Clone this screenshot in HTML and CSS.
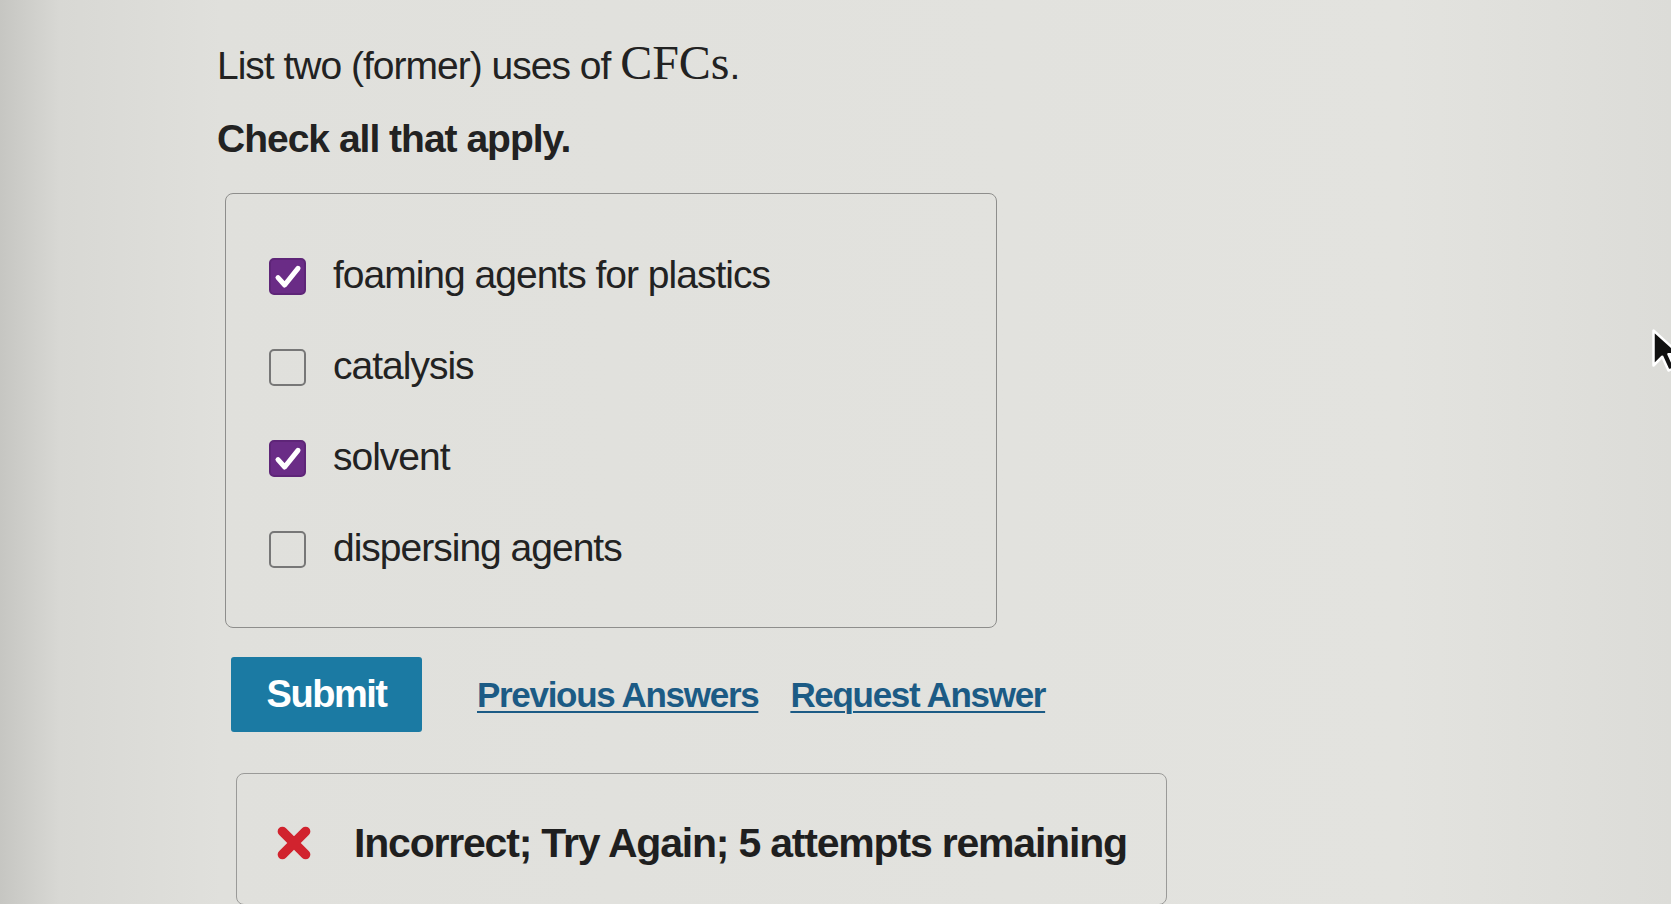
FILE: index.html
```html
<!DOCTYPE html>
<html lang="en">
<head>
    <meta charset="UTF-8">
    <title>List two (former) uses of CFCs</title>
    <link rel="stylesheet" href="styles.css">
</head>
<body>
    <div class="question">
        <p class="prompt">List two (former) uses of <span class="math">CFCs</span>.</p>
        <p class="instructions">Check all that apply.</p>

        <div class="choices">
            <label class="choice">
                <span class="box checked">
                    <svg viewBox="0 0 24 24" width="32" height="32"><path d="M4.5 12.5l5 5.5L19.5 5.5" fill="none" stroke="#fff" stroke-width="3.8" stroke-linecap="round" stroke-linejoin="round"/></svg>
                </span>
                <span class="choice-text">foaming agents for plastics</span>
            </label>
            <label class="choice">
                <span class="box"></span>
                <span class="choice-text">catalysis</span>
            </label>
            <label class="choice">
                <span class="box checked">
                    <svg viewBox="0 0 24 24" width="32" height="32"><path d="M4.5 12.5l5 5.5L19.5 5.5" fill="none" stroke="#fff" stroke-width="3.8" stroke-linecap="round" stroke-linejoin="round"/></svg>
                </span>
                <span class="choice-text">solvent</span>
            </label>
            <label class="choice">
                <span class="box"></span>
                <span class="choice-text">dispersing agents</span>
            </label>
        </div>

        <div class="actions">
            <button class="submit">Submit</button>
            <a href="#" class="action-link">Previous Answers</a>
            <a href="#" class="action-link">Request Answer</a>
        </div>

        <div class="feedback">
            <svg class="wrong-icon" viewBox="0 0 36 36" width="38" height="38"><path d="M7 7L29 29M29 7L7 29" stroke="#d1232e" stroke-width="9" stroke-linecap="round"/></svg>
            <span class="feedback-text">Incorrect; Try Again; 5 attempts remaining</span>
        </div>
    </div>

    <svg class="cursor" viewBox="0 0 24 36" width="30" height="45"><path d="M2 2L2 30L9 23L14 34L19 32L14 21L23 21Z" fill="#111" stroke="#fff" stroke-width="2" stroke-linejoin="round"/></svg>
</body>
</html>
```

FILE: styles.css
```css
body {
    margin: 0;
    min-height: 904px;
    background: linear-gradient(to right, #c6c6c2 0px, #d8d8d4 60px, #e0e0dc 220px, #e3e3df 1400px, #dcdcd8 1671px);
    font-family: "Liberation Sans", Arial, sans-serif;
    color: #222;
    overflow: hidden;
    position: relative;
}

.question {
    padding: 38px 0 0 217px;
}

.prompt {
    margin: 0;
    font-size: 39px;
    line-height: 50px;
    letter-spacing: -1px;
}

.math {
    font-family: "Liberation Serif", "Times New Roman", serif;
    font-size: 48px;
    letter-spacing: 0;
}

.instructions {
    margin: 23px 0 0;
    font-size: 39px;
    line-height: 50px;
    font-weight: bold;
    letter-spacing: -1px;
}

.choices {
    margin: 29px 0 0 8px;
    width: 770px;
    padding: 37px 0 32px;
    border: 1.5px solid #8e8e8c;
    border-radius: 8px;
    display: flex;
    flex-direction: column;
}

.choice {
    display: flex;
    align-items: center;
    height: 91px;
    padding-left: 43px;
}

.box {
    width: 37px;
    height: 37px;
    box-sizing: border-box;
    border: 2.5px solid #777;
    border-radius: 5px;
    display: flex;
    align-items: center;
    justify-content: center;
    flex-shrink: 0;
}

.box.checked {
    background: #6a2c86;
    border-color: #5e2578;
}

.choice-text {
    margin-left: 27px;
    font-size: 39px;
    line-height: 45px;
    letter-spacing: -1px;
    padding-bottom: 4px;
}

.actions {
    display: flex;
    align-items: center;
    margin: 29px 0 0 14px;
}

.submit {
    width: 191px;
    height: 75px;
    background: #1b7aa3;
    color: #fff;
    border: none;
    border-radius: 3px;
    font-family: "Liberation Sans", Arial, sans-serif;
    font-size: 38px;
    font-weight: bold;
    letter-spacing: -1.5px;
    padding: 0;
}

.action-link {
    margin-left: 55px;
    color: #1c5b85;
    font-size: 35px;
    font-weight: bold;
    letter-spacing: -1.3px;
    text-decoration: underline;
    text-decoration-thickness: 2px;
    text-underline-offset: 4px;
}

.action-link + .action-link {
    margin-left: 32px;
}

.feedback {
    margin: 41px 0 0 19px;
    width: 931px;
    height: 132px;
    box-sizing: border-box;
    border: 1.5px solid #9a9a98;
    border-radius: 8px;
    display: flex;
    align-items: center;
    padding: 8px 0 0 38px;
}

.feedback-text {
    margin-left: 41px;
    font-size: 41px;
    font-weight: bold;
    letter-spacing: -1.2px;
    color: #1f1f1f;
}

.cursor {
    position: absolute;
    left: 1651px;
    top: 328px;
}
```
